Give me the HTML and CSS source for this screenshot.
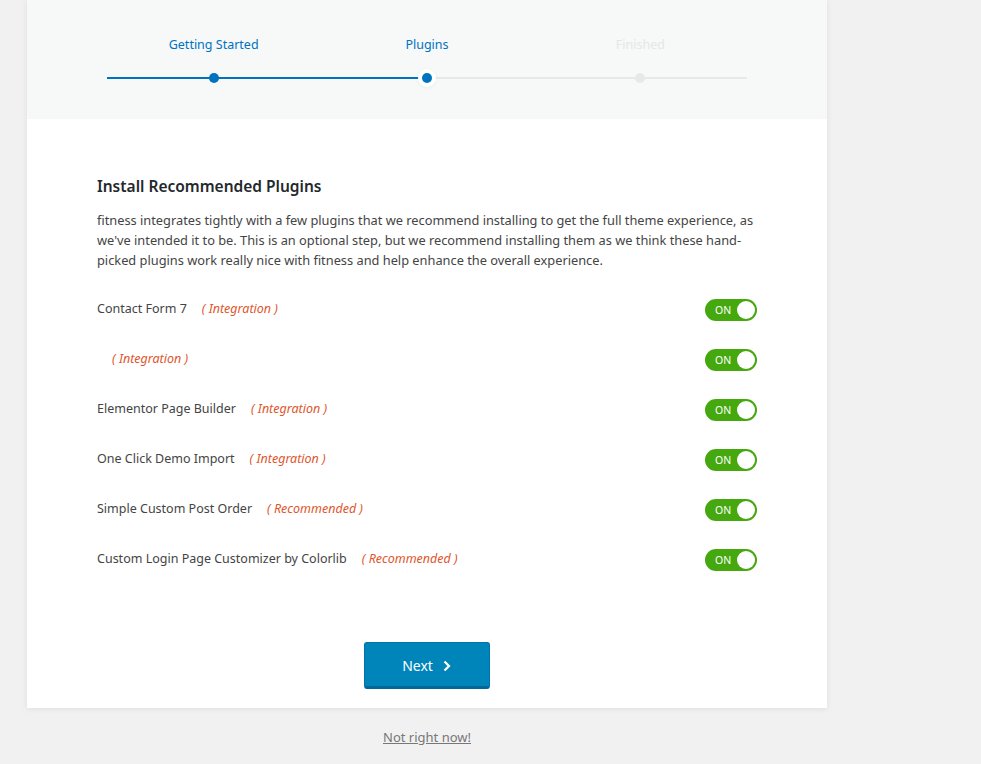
FILE: index.html
```html
<!DOCTYPE html>
<html>
<head>
<meta charset="utf-8">
<link rel="stylesheet" href="styles.css">
</head>
<body>
<div class="wrap">
  <div class="card">
    <div class="steps-bar">
      <ol class="steps">
        <li class="step done"><span class="label">Getting Started</span><span class="track"><span class="dot"></span></span></li>
        <li class="step active"><span class="label">Plugins</span><span class="track"><span class="dot"></span></span></li>
        <li class="step"><span class="label">Finished</span><span class="track"><span class="dot"></span></span></li>
      </ol>
    </div>
    <div class="content">
      <h1 class="title">Install Recommended Plugins</h1>
      <p class="intro">fitness integrates tightly with a few plugins that we recommend installing to get the full theme experience, as we've intended it to be. This is an optional step, but we recommend installing them as we think these hand-picked plugins work really nice with fitness and help enhance the overall experience.</p>
      <ul class="plugins">
        <li class="plugin"><span class="name">Contact Form 7</span><span class="tag">( Integration )</span><span class="toggle"><span class="on">ON</span><span class="knob"></span></span></li>
        <li class="plugin"><span class="name"></span><span class="tag">( Integration )</span><span class="toggle"><span class="on">ON</span><span class="knob"></span></span></li>
        <li class="plugin"><span class="name">Elementor Page Builder</span><span class="tag">( Integration )</span><span class="toggle"><span class="on">ON</span><span class="knob"></span></span></li>
        <li class="plugin"><span class="name">One Click Demo Import</span><span class="tag">( Integration )</span><span class="toggle"><span class="on">ON</span><span class="knob"></span></span></li>
        <li class="plugin"><span class="name">Simple Custom Post Order</span><span class="tag">( Recommended )</span><span class="toggle"><span class="on">ON</span><span class="knob"></span></span></li>
        <li class="plugin"><span class="name">Custom Login Page Customizer by Colorlib</span><span class="tag">( Recommended )</span><span class="toggle"><span class="on">ON</span><span class="knob"></span></span></li>
      </ul>
      <div class="actions">
        <a class="btn-next" href="#">Next <svg class="chev" width="10" height="12" viewBox="0 0 10 12"><path d="M2.5 1.5 L7 6 L2.5 10.5" fill="none" stroke="#fff" stroke-width="2.2"/></svg></a>
      </div>
    </div>
  </div>
  <div class="skip"><a href="#">Not right now!</a></div>
</div>
</body>
</html>
```

FILE: styles.css
```css
html, body {
  margin: 0;
  padding: 0;
}
body {
  background: #f1f1f1;
  font-family: "Noto Sans", "Open Sans", sans-serif;
  font-size: 13px;
  color: #444;
}
.wrap {
  width: 800px;
  margin-left: 27px;
}
.card {
  background: #fff;
  box-shadow: 0 1px 6px rgba(0, 0, 0, 0.08);
}
.steps-bar {
  background: #f7f8f8;
  height: 119px;
  padding-top: 35px;
  box-sizing: border-box;
}
.steps {
  list-style: none;
  margin: 0 auto;
  padding: 0;
  width: 640px;
  display: grid;
  grid-template-columns: repeat(3, 1fr);
}
.step {
  display: flex;
  flex-direction: column;
  align-items: center;
}
.label {
  font-size: 12.5px;
  line-height: 20px;
  color: #e6e6e6;
}
.done .label, .active .label {
  color: #0073bf;
}
.track {
  margin-top: 22px;
  align-self: stretch;
  height: 2px;
  background: #e8e8e8;
  position: relative;
  display: flex;
  justify-content: center;
  align-items: center;
}
.done .track {
  background: #0073bf;
}
.active .track {
  background: linear-gradient(to right, #0073bf 50%, #e8e8e8 50%);
}
.dot {
  width: 10px;
  height: 10px;
  border-radius: 50%;
  background: #e8e8e8;
  flex: none;
}
.done .dot {
  background: #0073bf;
}
.active .dot {
  background: #0073bf;
  box-shadow: 0 0 0 4px #fff, 0 1px 4px 4px rgba(0, 0, 0, 0.05);
}
.content {
  padding: 56px 70px 19px;
}
.title {
  margin: 0;
  font-size: 15.5px;
  font-weight: 600;
  line-height: 22px;
  color: #23282d;
}
.intro {
  margin: 13px 0 0;
  line-height: 20px;
  font-size: 12.8px;
  color: #444;
}
.plugins {
  list-style: none;
  margin: 13px 0 0;
  padding: 0;
}
.plugin {
  display: flex;
  align-items: center;
  height: 50px;
}
.name {
  color: #444;
  font-size: 12.5px;
}
.tag {
  margin-left: 15px;
  font-style: italic;
  color: #e0552b;
  font-size: 12.5px;
}
.toggle {
  margin-left: auto;
  margin-top: 4px;
  width: 52px;
  height: 22px;
  border-radius: 11px;
  background: #45a80f;
  display: flex;
  align-items: center;
  justify-content: space-between;
  padding: 0 2px 0 10px;
  box-sizing: border-box;
}
.on {
  color: #fff;
  font-size: 10.5px;
  line-height: 1;
  margin-top: 1px;
}
.knob {
  width: 18px;
  height: 18px;
  border-radius: 50%;
  background: #fff;
}
.actions {
  display: flex;
  justify-content: center;
  margin-top: 59px;
}
.btn-next {
  display: flex;
  align-items: center;
  justify-content: center;
  gap: 9px;
  width: 126px;
  height: 47px;
  box-sizing: border-box;
  background: #0085ba;
  border: 1px solid #0073aa;
  border-bottom: 3px solid #006799;
  border-radius: 3px;
  color: #fff;
  font-size: 14px;
  text-decoration: none;
  padding-top: 2px;
}
.chev {
  display: block;
}
.skip {
  text-align: center;
  padding-top: 20px;
}
.skip a {
  color: #777;
  font-size: 13px;
  text-decoration: underline;
}
```
